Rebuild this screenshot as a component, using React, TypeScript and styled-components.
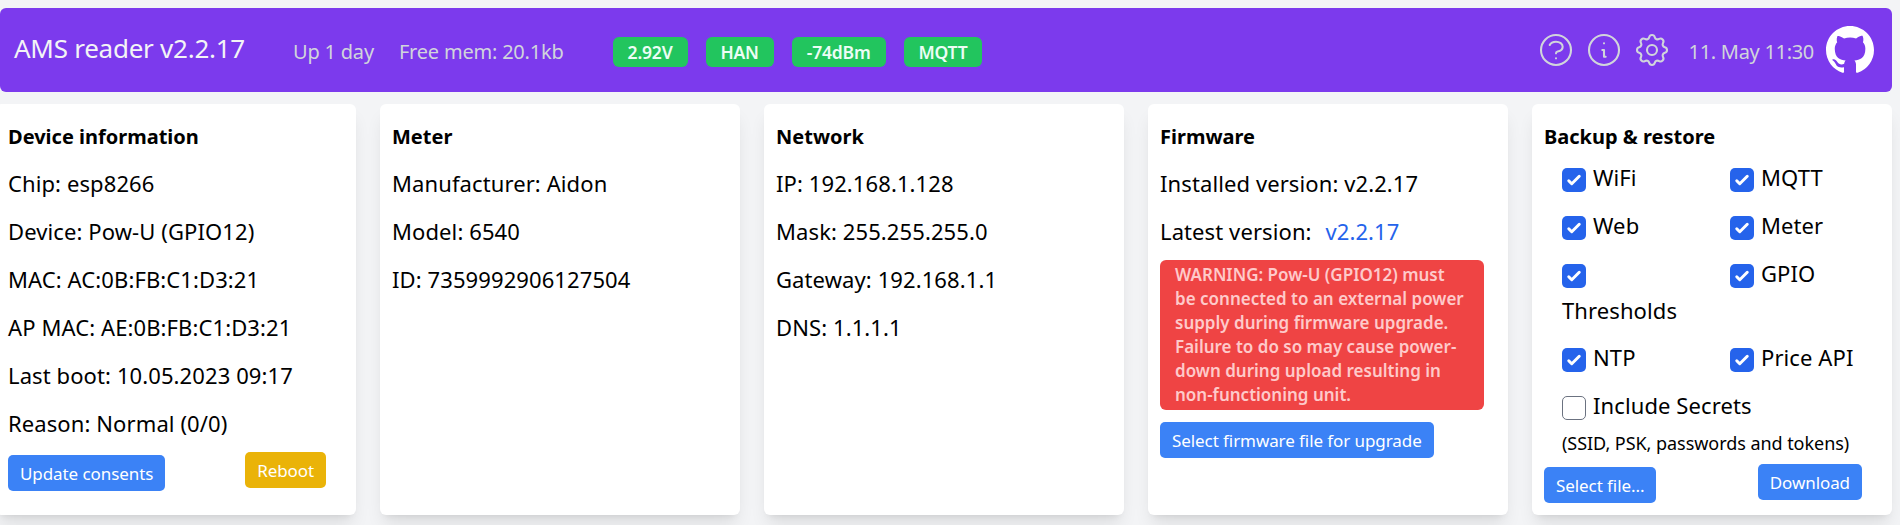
import React from 'react'
import styled, { createGlobalStyle } from 'styled-components'
import { HiOutlineCog, HiOutlineInformationCircle, HiOutlineQuestionMarkCircle } from 'react-icons/hi'

const GlobalStyle = createGlobalStyle`
  * { box-sizing: border-box; }
  html, body {
    margin: 0;
    background: #f3f4f6;
    font-family: 'Noto Sans', 'Open Sans', sans-serif;
    color: #000;
    overflow: hidden;
  }
`

const Page = styled.div`
  width: 1892px;
  height: 525px;
  padding-top: 8px;
`

const Nav = styled.nav`
  height: 84px;
  background: #7c3aed;
  border-radius: 6px;
  display: flex;
  align-items: center;
  padding: 0 18px 0 14px;
  color: #d1d5db;
`

const Brand = styled.span`
  font-size: 26px;
  letter-spacing: -0.25px;
  color: #f3f4f6;
  width: 279px;
  flex-shrink: 0;
  margin-bottom: 5px;
`

const NavText = styled.span`
  font-size: 20px;
  letter-spacing: -0.2px;
  margin-right: 25px;
  margin-top: 3px;
`

const Chips = styled.div`
  display: flex;
  gap: 18px;
  margin: 4px 0 0 24px;
`

const Chip = styled.span`
  height: 30px;
  padding: 0 15px;
  border-radius: 6px;
  background: #22c55e;
  color: #ecfdf5;
  font-size: 17.5px;
  font-weight: 600;
  letter-spacing: -0.2px;
  display: flex;
  align-items: center;
`

const NavRight = styled.div`
  margin-left: auto;
  display: flex;
  align-items: center;
`

const IconRow = styled.div`
  display: flex;
  gap: 8px;
  margin-right: 17px;
  svg { width: 40px; height: 40px; display: block; }
  svg path { stroke-width: 1.25; }
`

const Clock = styled.span`
  font-size: 20px;
  letter-spacing: -0.3px;
  margin: 3px 12px 0 0;
`

const GithubMark = styled.svg`
  width: 48px;
  height: 48px;
  fill: #fff;
  display: block;
`

const Grid = styled.div`
  display: grid;
  grid-template-columns: repeat(5, 360px);
  gap: 24px;
  margin: 12px 0 0 -4px;
`

const Card = styled.section`
  height: 411px;
  background: #fff;
  border-radius: 6px;
  padding: 21px 12px 12px;
  box-shadow: 0 12px 18px -4px rgba(0, 0, 0, 0.1), 0 5px 7px -5px rgba(0, 0, 0, 0.1);
`

const Title = styled.strong`
  display: block;
  font-size: 20px;
  line-height: 24px;
  margin: 0 0 22px;
  font-weight: 700;
`

const Line = styled.div`
  font-size: 22px;
  line-height: 24px;
  margin-bottom: 24px;
  letter-spacing: 0.1px;
`

const Link = styled.span`
  color: #2563eb;
  margin-left: 8px;
`

const Button = styled.button<{ $color?: 'blue' | 'yellow'; $lift?: number }>`
  height: 36px;
  padding: 0 12px;
  border: 0;
  border-radius: 5px;
  background: ${props => (props.$color === 'yellow' ? '#eab308' : '#3b82f6')};
  color: #fff;
  font-family: inherit;
  font-size: 17px;
  letter-spacing: -0.08px;
  white-space: nowrap;
  transform: translateY(${props => props.$lift ?? 0}px);
`

const ButtonRow = styled.div<{ $gap?: number }>`
  display: flex;
  justify-content: space-between;
  align-items: flex-end;
  padding-right: 18px;
  margin-top: ${props => props.$gap ?? 12}px;
`

const Warning = styled.div`
  width: 324px;
  background: #ef4444;
  color: #fecaca;
  border-radius: 6px;
  font-size: 17px;
  font-weight: 600;
  line-height: 24px;
  padding: 3px 16px 3px 15px;
  margin: -7px 0 12px;
`

const CheckGrid = styled.div`
  display: grid;
  grid-template-columns: 168px 1fr;
  padding-left: 18px;
  row-gap: 24px;
  margin-top: -3px;
`

const CheckItem = styled.label<{ $stacked?: boolean }>`
  display: flex;
  flex-wrap: ${props => (props.$stacked ? 'wrap' : 'nowrap')};
  gap: 0 7px;
  font-size: 22px;
  line-height: 24px;
  letter-spacing: 0.1px;
`

const CheckText = styled.span<{ $stacked?: boolean }>`
  margin-top: ${props => (props.$stacked ? '10px' : '-3px')};
  margin-bottom: ${props => (props.$stacked ? '2px' : '0')};
  flex-basis: ${props => (props.$stacked ? '100%' : 'auto')};
`

const Check = styled.span<{ $checked?: boolean }>`
  display: flex;
  flex-shrink: 0;
  width: 24px;
  height: 24px;
  border-radius: 5px;
  background: ${props => (props.$checked ? '#2563eb' : '#fff')};
  border: ${props => (props.$checked ? '0' : '1px solid #6b7280')};
  svg { width: 24px; height: 24px; fill: #fff; }
`

const Note = styled.div`
  font-size: 18px;
  line-height: 24px;
  letter-spacing: -0.05px;
  padding-left: 18px;
  margin-top: 11px;
`

const SecretsRow = styled.div`
  padding-left: 18px;
  margin-top: 24px;
`

const Box: React.FC<{ label: string; checked?: boolean; stacked?: boolean }> = ({ label, checked = true, stacked }) => (
  <CheckItem $stacked={stacked}>
    <Check $checked={checked}>
      {checked && (
        <svg viewBox="0 0 16 16">
          <path d="M12.207 4.793a1 1 0 010 1.414l-5 5a1 1 0 01-1.414 0l-2-2a1 1 0 011.414-1.414L6.5 9.086l4.293-4.293a1 1 0 011.414 0z" />
        </svg>
      )}
    </Check>
    <CheckText $stacked={stacked}>{label}</CheckText>
  </CheckItem>
)

export default function App() {
  return (
    <Page>
      <GlobalStyle />
      <Nav>
        <Brand>AMS reader v2.2.17</Brand>
        <NavText>Up 1 day</NavText>
        <NavText>Free mem: 20.1kb</NavText>
        <Chips>
          <Chip>2.92V</Chip>
          <Chip>HAN</Chip>
          <Chip>-74dBm</Chip>
          <Chip>MQTT</Chip>
        </Chips>
        <NavRight>
          <IconRow>
            <HiOutlineQuestionMarkCircle />
            <HiOutlineInformationCircle />
            <HiOutlineCog />
          </IconRow>
          <Clock>11. May 11:30</Clock>
          <GithubMark viewBox="0 0 16 16">
            <path d="M8 0C3.58 0 0 3.58 0 8c0 3.54 2.29 6.53 5.47 7.59.4.07.55-.17.55-.38 0-.19-.01-.82-.01-1.49-2.01.37-2.53-.49-2.69-.94-.09-.23-.48-.94-.82-1.13-.28-.15-.68-.52-.01-.53.63-.01 1.08.58 1.23.82.72 1.21 1.87.87 2.33.66.07-.52.28-.87.51-1.07-1.78-.2-3.64-.89-3.64-3.95 0-.87.31-1.59.82-2.15-.08-.2-.36-1.02.08-2.12 0 0 .67-.21 2.2.82.64-.18 1.32-.27 2-.27.68 0 1.36.09 2 .27 1.53-1.04 2.2-.82 2.2-.82.44 1.1.16 1.92.08 2.12.51.56.82 1.27.82 2.15 0 3.07-1.87 3.75-3.65 3.95.29.25.54.73.54 1.48 0 1.07-.01 1.93-.01 2.2 0 .21.15.46.55.38A8.013 8.013 0 0016 8c0-4.42-3.58-8-8-8z" />
          </GithubMark>
        </NavRight>
      </Nav>
      <Grid>
        <Card>
          <Title>Device information</Title>
          <Line>Chip: esp8266</Line>
          <Line>Device: Pow-U (GPIO12)</Line>
          <Line>MAC: AC:0B:FB:C1:D3:21</Line>
          <Line>AP MAC: AE:0B:FB:C1:D3:21</Line>
          <Line>Last boot: 10.05.2023 09:17</Line>
          <Line>Reason: Normal (0/0)</Line>
          <ButtonRow $gap={-4}>
            <Button>Update consents</Button>
            <Button $color="yellow" $lift={-3}>Reboot</Button>
          </ButtonRow>
        </Card>
        <Card>
          <Title>Meter</Title>
          <Line>Manufacturer: Aidon</Line>
          <Line>Model: 6540</Line>
          <Line>ID: 7359992906127504</Line>
        </Card>
        <Card>
          <Title>Network</Title>
          <Line>IP: 192.168.1.128</Line>
          <Line>Mask: 255.255.255.0</Line>
          <Line>Gateway: 192.168.1.1</Line>
          <Line>DNS: 1.1.1.1</Line>
        </Card>
        <Card>
          <Title>Firmware</Title>
          <Line>Installed version: v2.2.17</Line>
          <Line>Latest version: <Link>v2.2.17</Link></Line>
          <Warning>
            WARNING: Pow-U (GPIO12) must be connected to an external power supply during firmware upgrade. Failure to do so may cause power-down during upload resulting in non-functioning unit.
          </Warning>
          <Button>Select firmware file for upgrade</Button>
        </Card>
        <Card>
          <Title>Backup &amp; restore</Title>
          <CheckGrid>
            <Box label="WiFi" />
            <Box label="MQTT" />
            <Box label="Web" />
            <Box label="Meter" />
            <Box label="Thresholds" stacked />
            <Box label="GPIO" />
            <Box label="NTP" />
            <Box label="Price API" />
          </CheckGrid>
          <SecretsRow>
            <Box label="Include Secrets" checked={false} />
          </SecretsRow>
          <Note>(SSID, PSK, passwords and tokens)</Note>
          <ButtonRow>
            <Button>Select file...</Button>
            <Button $lift={-3}>Download</Button>
          </ButtonRow>
        </Card>
      </Grid>
    </Page>
  )
}
